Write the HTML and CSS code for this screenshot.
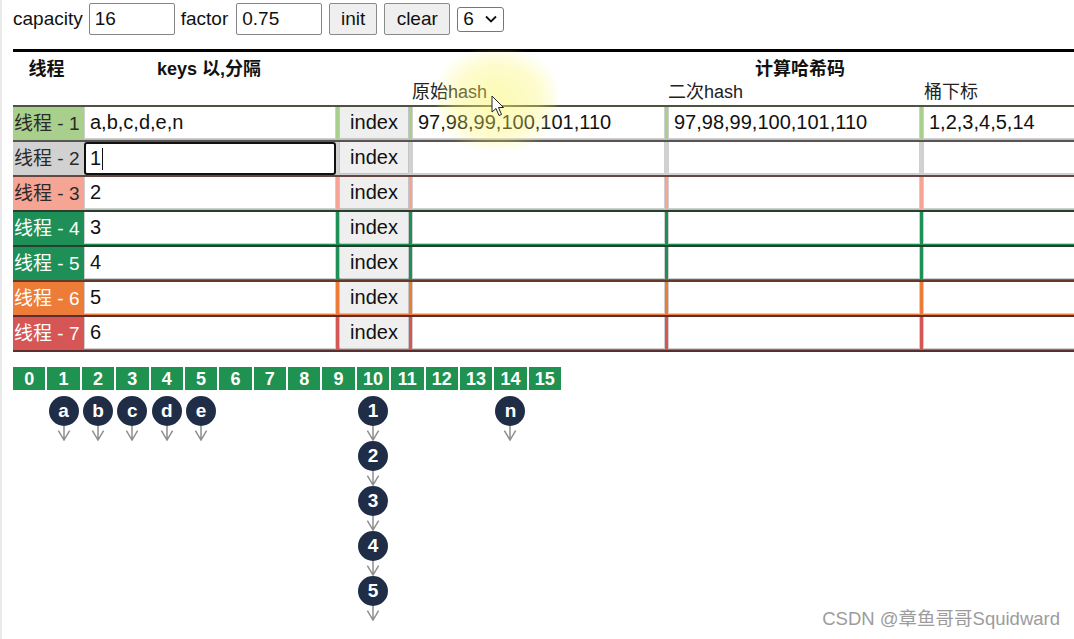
FILE: index.html
```html
<!DOCTYPE html>
<html lang="zh">
<head>
<meta charset="utf-8">
<title>HashMap 演示</title>
<link rel="stylesheet" href="styles.css">
</head>
<body>
<div class="page">
  <div class="toolbar">
    <span class="lbl">capacity</span>
    <input class="tin" type="text" value="16">
    <span class="lbl lbl2">factor</span>
    <input class="tin" type="text" value="0.75">
    <button class="tbtn btn-init">init</button>
    <button class="tbtn btn-clear">clear</button>
    <div class="tsel"><span>6</span><svg class="chev" viewBox="0 0 12 8"><path d="M1 1.5L6 6.5L11 1.5"/></svg></div>
  </div>

  <div class="table">
    <div class="head1">
      <div class="h-label">线程</div>
      <div class="h-keys">keys 以,分隔</div>
      <div class="h-btn"></div>
      <div class="h-hash">计算哈希码</div>
    </div>
    <div class="head2">
      <div class="h-label"></div>
      <div class="h-keys"></div>
      <div class="h-btn"></div>
      <div class="h-col">原始hash</div>
      <div class="h-col">二次hash</div>
      <div class="h-col h-last">桶下标</div>
    </div>

    <div class="row r1">
      <div class="label">线程 - 1</div>
      <input class="keys" type="text" value="a,b,c,d,e,n">
      <button class="ibtn">index</button>
      <input class="cell" type="text" value="97,98,99,100,101,110">
      <input class="cell" type="text" value="97,98,99,100,101,110">
      <input class="cell last" type="text" value="1,2,3,4,5,14">
    </div>
    <div class="row r2">
      <div class="label">线程 - 2</div>
      <div class="keys focus">1<span class="caret"></span></div>
      <button class="ibtn">index</button>
      <input class="cell" type="text" value="">
      <input class="cell" type="text" value="">
      <input class="cell last" type="text" value="">
    </div>
    <div class="row r3">
      <div class="label">线程 - 3</div>
      <input class="keys" type="text" value="2">
      <button class="ibtn">index</button>
      <input class="cell" type="text" value="">
      <input class="cell" type="text" value="">
      <input class="cell last" type="text" value="">
    </div>
    <div class="row r4">
      <div class="label">线程 - 4</div>
      <input class="keys" type="text" value="3">
      <button class="ibtn">index</button>
      <input class="cell" type="text" value="">
      <input class="cell" type="text" value="">
      <input class="cell last" type="text" value="">
    </div>
    <div class="row r5">
      <div class="label">线程 - 5</div>
      <input class="keys" type="text" value="4">
      <button class="ibtn">index</button>
      <input class="cell" type="text" value="">
      <input class="cell" type="text" value="">
      <input class="cell last" type="text" value="">
    </div>
    <div class="row r6">
      <div class="label">线程 - 6</div>
      <input class="keys" type="text" value="5">
      <button class="ibtn">index</button>
      <input class="cell" type="text" value="">
      <input class="cell" type="text" value="">
      <input class="cell last" type="text" value="">
    </div>
    <div class="row r7">
      <div class="label">线程 - 7</div>
      <input class="keys" type="text" value="6">
      <button class="ibtn">index</button>
      <input class="cell" type="text" value="">
      <input class="cell" type="text" value="">
      <input class="cell last" type="text" value="">
    </div>
  </div>

  <div class="buckets">
    <div class="bk">0</div><div class="bk">1</div><div class="bk">2</div><div class="bk">3</div>
    <div class="bk">4</div><div class="bk">5</div><div class="bk">6</div><div class="bk">7</div>
    <div class="bk">8</div><div class="bk">9</div><div class="bk">10</div><div class="bk">11</div>
    <div class="bk">12</div><div class="bk">13</div><div class="bk">14</div><div class="bk">15</div>
  </div>

  <div class="chains">
    <div class="chain"></div>
    <div class="chain"><div class="node">a</div><svg class="arrow" viewBox="0 0 16 16"><path d="M8 0V15M2 5L8 15L14 5"/></svg></div>
    <div class="chain"><div class="node">b</div><svg class="arrow" viewBox="0 0 16 16"><path d="M8 0V15M2 5L8 15L14 5"/></svg></div>
    <div class="chain"><div class="node">c</div><svg class="arrow" viewBox="0 0 16 16"><path d="M8 0V15M2 5L8 15L14 5"/></svg></div>
    <div class="chain"><div class="node">d</div><svg class="arrow" viewBox="0 0 16 16"><path d="M8 0V15M2 5L8 15L14 5"/></svg></div>
    <div class="chain"><div class="node">e</div><svg class="arrow" viewBox="0 0 16 16"><path d="M8 0V15M2 5L8 15L14 5"/></svg></div>
    <div class="chain"></div>
    <div class="chain"></div>
    <div class="chain"></div>
    <div class="chain"></div>
    <div class="chain">
      <div class="node">1</div><svg class="arrow" viewBox="0 0 16 16"><path d="M8 0V15M2 5L8 15L14 5"/></svg>
      <div class="node">2</div><svg class="arrow" viewBox="0 0 16 16"><path d="M8 0V15M2 5L8 15L14 5"/></svg>
      <div class="node">3</div><svg class="arrow" viewBox="0 0 16 16"><path d="M8 0V15M2 5L8 15L14 5"/></svg>
      <div class="node">4</div><svg class="arrow" viewBox="0 0 16 16"><path d="M8 0V15M2 5L8 15L14 5"/></svg>
      <div class="node">5</div><svg class="arrow" viewBox="0 0 16 16"><path d="M8 0V15M2 5L8 15L14 5"/></svg>
    </div>
    <div class="chain"></div>
    <div class="chain"></div>
    <div class="chain"></div>
    <div class="chain"><div class="node">n</div><svg class="arrow" viewBox="0 0 16 16"><path d="M8 0V15M2 5L8 15L14 5"/></svg></div>
    <div class="chain"></div>
  </div>

  <div class="glow"></div>
  <svg class="cursor" viewBox="0 0 14 22"><path d="M1 1V17L5 13.5L8 20.5L10.5 19.5L7.5 12.5H12.5Z"/></svg>
  <div class="watermark">CSDN @章鱼哥哥Squidward</div>
</div>
</body>
</html>
```

FILE: styles.css
```css
html, body {
  margin: 0;
  padding: 0;
  overflow: hidden;
  background: #fff;
}
body {
  font-family: "Liberation Sans", "Noto Sans CJK SC", sans-serif;
  color: #111;
  width: 1074px;
  height: 639px;
}
.page {
  position: relative;
  height: 639px;
  overflow: hidden;
  box-sizing: border-box;
  border-left: 2px solid #e9e9e9;
  padding: 3px 0 0 11px;
}

/* toolbar */
.toolbar {
  display: flex;
  align-items: center;
  height: 32px;
  font-size: 19px;
}
.lbl { margin-right: 6px; }
.lbl2 { margin-right: 8px; }
.tin {
  box-sizing: border-box;
  width: 86px;
  height: 32px;
  margin: 0 6px 0 0;
  padding: 0 5px;
  border: 1px solid #858585;
  border-radius: 2px;
  font: 19px "Liberation Sans", sans-serif;
  color: #111;
}
.tbtn {
  box-sizing: border-box;
  height: 32px;
  margin: 0 6px 0 1px;
  padding: 0 10px;
  border: 1px solid #8a8a8a;
  border-radius: 2px;
  background: #efefef;
  font: 19px "Liberation Sans", sans-serif;
  color: #111;
}
.btn-init { width: 48px; padding: 0; margin-left: 1px; }
.btn-clear { width: 66px; padding: 0; }
.tsel {
  box-sizing: border-box;
  display: flex;
  align-items: center;
  justify-content: space-between;
  width: 47px;
  height: 25px;
  margin-left: 1px;
  padding: 0 6px 0 5px;
  border: 1px solid #777;
  border-radius: 3px;
  background: #fff;
  font-size: 19px;
  color: #111;
}
.chev {
  width: 12px;
  height: 8px;
  fill: none;
  stroke: #111;
  stroke-width: 1.8;
}

/* table */
.table {
  margin-top: 14px;
  width: 1177px;
  border-top: 3px solid #000;
}
.head1, .head2 {
  display: flex;
  gap: 3px;
}
.head1 {
  height: 29px;
  align-items: center;
  font-weight: bold;
  font-size: 18px;
}
.head2 {
  height: 24px;
  font-size: 18px;
  line-height: 23px;
}
.h-label { width: 67px; text-align: center; }
.h-keys { width: 252px; text-align: center; }
.h-btn { width: 70px; }
.h-hash { width: 778px; text-align: center; }
.h-col { width: 252px; padding-left: 1px; color: #222; }
.h-last { width: 266px; }

.row {
  display: flex;
  gap: 3px;
  align-items: stretch;
  height: 35px;
  box-sizing: border-box;
  border-top: 2px solid rgba(40, 30, 30, 0.7);
  background: var(--c);
}
.row:last-child { border-bottom: 2px solid rgba(40, 30, 30, 0.7); height: 37px; }
.r1 { --c: #a9cf8c; }
.r2 { --c: #d1d1d1; }
.r3 { --c: #f6a494; }
.r4 { --c: #1f8f58; }
.r5 { --c: #1f8f58; }
.r6 { --c: #ec7c37; }
.r7 { --c: #d65656; }

.label {
  width: 67px;
  font-size: 19px;
  line-height: 33px;
  color: #2a2a2a;
  white-space: nowrap;
  padding-left: 1px;
  box-sizing: border-box;
}
.r4 .label, .r5 .label, .r6 .label, .r7 .label { color: #fff; }

.keys, .cell {
  box-sizing: border-box;
  height: 32px;
  margin: 0;
  padding: 0 5px;
  border: 1px solid #cfcfcf;
  border-top: none;
  background: #fff;
  font: 20px "Liberation Sans", sans-serif;
  color: #111;
  outline: none;
}
.keys { width: 252px; margin-left: 1px; }
.cell { width: 253px; }
.cell + .cell { width: 252px; }
.cell.last { width: 267px; }

.keys.focus {
  display: flex;
  align-items: center;
  height: 33px;
  border: 2px solid #111;
  border-radius: 3px;
  padding-left: 4px;
}
.caret {
  display: inline-block;
  width: 1px;
  height: 22px;
  background: #111;
  margin-left: 1px;
}

.ibtn {
  box-sizing: border-box;
  width: 70px;
  height: 32px;
  margin: 0;
  padding: 0;
  border: 1px solid #c4c4c4;
  border-top: none;
  border-radius: 0 0 2px 2px;
  background: #efefef;
  font: 20px "Liberation Sans", sans-serif;
  color: #111;
}

/* buckets */
.buckets {
  margin-top: 15px;
  width: 548px;
  display: grid;
  grid-template-columns: repeat(16, 1fr);
  column-gap: 2px;
}
.bk {
  height: 23px;
  background: #1f9150;
  color: #fff;
  font-weight: bold;
  font-size: 18px;
  line-height: 24px;
  text-align: center;
}
.chains {
  margin-top: 6px;
  width: 548px;
  display: grid;
  grid-template-columns: repeat(16, 1fr);
  column-gap: 2px;
}
.chain {
  display: flex;
  flex-direction: column;
  align-items: center;
}
.node {
  width: 30px;
  height: 30px;
  border-radius: 50%;
  background: #1f2d47;
  color: #fff;
  font-weight: bold;
  font-size: 19px;
  line-height: 30px;
  text-align: center;
}
.arrow {
  width: 16px;
  height: 15px;
  fill: none;
  stroke: #8f8f8f;
  stroke-width: 1.6;
}

/* overlays */
.glow {
  position: absolute;
  left: 435px;
  top: 50px;
  width: 120px;
  height: 100px;
  border-radius: 35%;
  background: radial-gradient(ellipse at center, rgba(250, 245, 100, 0.5) 0%, rgba(250, 245, 100, 0.32) 50%, rgba(250, 245, 100, 0) 78%);
  pointer-events: none;
}
.cursor {
  position: absolute;
  left: 489px;
  top: 95px;
  width: 14px;
  height: 22px;
  fill: #fff;
  stroke: #222;
  stroke-width: 1;
}
.watermark {
  position: absolute;
  right: 14px;
  bottom: 9px;
  font-size: 18.5px;
  color: #9c9c9c;
  text-shadow: 0 0 2px #fff;
}
```
